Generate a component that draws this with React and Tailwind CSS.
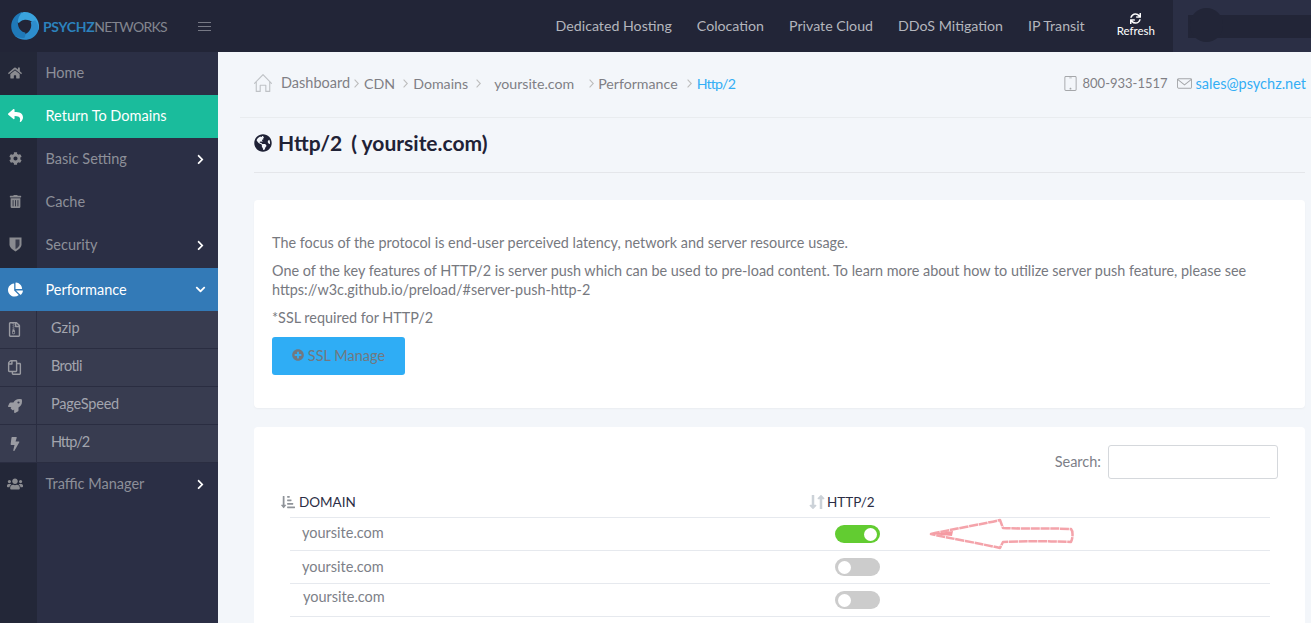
import React from "react";
import { FaHome, FaReply, FaCog, FaTrashAlt, FaChartPie, FaRegFileArchive, FaRegCopy, FaRocket, FaBolt, FaUsers, FaGlobeAmericas, FaPlusCircle, FaSync, FaChevronRight, FaChevronDown, FaSortAmountDownAlt, FaLongArrowAltDown, FaLongArrowAltUp } from "react-icons/fa";
import { SlHome, SlScreenTablet, SlEnvolope } from "react-icons/sl";

const font = "font-['Lato','Open_Sans',sans-serif]";

function Logo() {
  const blade = "M13 1.200 C22 0 30 8 29 17 C28.900 18 28.700 18.800 28.400 19.600 C26.500 12.500 20 8 14 9 C12 9.300 10.200 10.400 8.800 12 C7.200 11 5.800 10 5 8.500 C7 4.500 9.800 1.800 13 1.200 Z";
  return (
    <svg width="30" height="30" viewBox="0 0 30 30" className="shrink-0">
      <path d={blade} fill="#3aa3dd" />
      <path d={blade} fill="#2d8dcc" transform="rotate(120 15 15)" />
      <path d={blade} fill="#1f79b8" transform="rotate(240 15 15)" />
    </svg>
  );
}

function Shield() {
  return (
    <svg width="13" height="15" viewBox="0 0 13 15">
      <path d="M0.500 0.500h12v7c0 3-3 5.200-6 7-3-1.800-6-4-6-7z" fill="#8a8b90" />
      <path d="M6.500 2.500h4v5c0 1.900-2 3.400-4 4.600z" fill="#3a3d4c" />
    </svg>
  );
}

function Sep({ cls }) {
  return (
    <svg width="5" height="9" viewBox="0 0 5 9" className={cls}>
      <path d="M0.600 0.600 L4.300 4.500 L0.600 8.400" fill="none" stroke="#bdbdbd" strokeWidth="1.100" />
    </svg>
  );
}

function Row({ icon, label, h = "h-[43px]", bg = "bg-[#2b2f45]", iconBg = "bg-[#232738]", text = "text-[#8d8f99]", chev, iconCls = "text-[#8a8b90]", pb = "pb-[2px]", chevPb = "" }) {
  return (
    <div className={`flex items-center ${h} ${bg}`}>
      <div className={`w-[37px] h-full flex items-center justify-center pr-[7px] ${pb} ${iconBg} ${iconCls} text-[13px]`}>{icon}</div>
      <span className={`flex-1 pl-[8.5px] ${pb} text-[14.5px] ${text}`}>{label}</span>
      {chev && <span className={`pr-[12px] ${chevPb} text-white text-[11px]`}>{chev}</span>}
    </div>
  );
}

function Sub({ icon, label, cls = "" }) {
  return (
    <div className="flex h-[38px] bg-[#383c50] items-stretch border-b border-[#2a2d41]">
      <div className="w-[37px] flex items-center justify-center pr-[7px] text-[#9a9ba2] text-[15px] border-r border-[#2a2d41]">{icon}</div>
      <span className={`flex items-center pl-[14px] pb-[3px] text-[14.5px] text-[#a3a5ae] ${cls}`}>{label}</span>
    </div>
  );
}

function Sidebar() {
  return (
    <aside className="w-[218px] shrink-0 flex flex-col bg-[#2b2f45] relative">
      <Row icon={<FaHome className="text-[14px]" />} label="Home" />
      <Row icon={<FaReply className="text-[15px]" />} label="Return To Domains" bg="bg-[#1abc9c]" iconBg="bg-[#1abc9c]" text="text-white" iconCls="text-white" />
      <Row icon={<FaCog className="text-[13px]" />} label="Basic Setting" chev={<FaChevronRight />} />
      <Row icon={<FaTrashAlt className="text-[13px]" />} label="Cache" />
      <Row icon={<Shield />} label="Security" chev={<FaChevronRight />} h="h-[44px]" pb="pb-[3px]" chevPb="pb-[1px]" />
      <Row icon={<FaChartPie className="text-[15px]" />} label="Performance" pb="pb-0" bg="bg-[#337ab7]" iconBg="bg-[#337ab7]" text="text-white" iconCls="text-white" chev={<FaChevronDown />} />
      <Sub icon={<FaRegFileArchive />} label="Gzip" />
      <Sub icon={<FaRegCopy className="scale-x-[-1]" />} label="Brotli" cls="tracking-[-0.6px]" />
      <Sub icon={<FaRocket className="text-[14px]" />} label="PageSpeed" cls="tracking-[-0.2px]" />
      <Sub icon={<FaBolt className="text-[14px]" />} label="Http/2" cls="tracking-[-1px]" />
      <Row icon={<FaUsers className="text-[16px]" />} label="Traffic Manager" chev={<FaChevronRight />} />
      <div className="flex-1 w-[37px] bg-[#232738]" />
    </aside>
  );
}

function Header() {
  const nav = ["Dedicated Hosting", "Colocation", "Private Cloud", "DDoS Mitigation", "IP Transit"];
  return (
    <header className="h-[52px] flex bg-[#222537] shrink-0">
      <div className="w-[218px] flex items-center pl-[10px]">
        <Logo />
        <span className="ml-[3px] text-[14px] font-bold tracking-[-0.3px] text-[#2c82bd]">PSYCHZ</span>
        <span className="text-[14px] tracking-[-0.7px] text-[#83858f]">NETWORKS</span>
        <span className="ml-[31px] flex flex-col gap-[3px]">
          <i className="block w-[13px] h-px bg-[#777985]" />
          <i className="block w-[13px] h-px bg-[#777985]" />
          <i className="block w-[13px] h-px bg-[#777985]" />
        </span>
      </div>
      <nav className="flex-1 flex items-center justify-end gap-[25px] pr-[18px]">
        {nav.map((n) => (
          <span key={n} className="text-[14.2px] text-[#b4b6bd]">{n}</span>
        ))}
        <div className="flex flex-col items-center ml-[7px] -mt-[2px]">
          <FaSync className="text-white text-[11px]" />
          <span className="text-[11.500px] leading-[14px] text-white">Refresh</span>
        </div>
      </nav>
      <div className="w-[138px] bg-[#2b2f45] flex items-center relative overflow-hidden">
        <div className="absolute left-[15px] top-[15px] right-0 h-[23px] bg-[#222537]" />
        <div className="absolute left-[17px] top-[8px] w-[33px] h-[34px] rounded-full bg-[#222537]" />
      </div>
    </header>
  );
}

function Crumb() {
  return (
    <div className="h-[66px] ml-[22px] border-b border-[#e9ecef] flex items-center justify-between pl-[14px] pr-[5px] pb-[2px] text-[14.2px] text-[#7f7f85]">
      <div className="flex items-center">
        <SlHome className="text-[#bfc2c6] text-[18px] mr-[9px]" />
        <span className="-mt-[1px] text-[14.5px]">Dashboard</span>
        <Sep cls="ml-[4px] mr-[5px]" />
        <span>CDN</span>
        <Sep cls="ml-[8px] mr-[5px]" />
        <span>Domains</span>
        <Sep cls="ml-[8px] mr-[13px]" />
        <span>yoursite.com</span>
        <Sep cls="ml-[15px] mr-[4px]" />
        <span>Performance</span>
        <Sep cls="ml-[9px] mr-[5px]" />
        <span className="text-[#33aef5] tracking-[-0.8px]">Http/2</span>
      </div>
      <div className="flex items-center">
        <SlScreenTablet className="text-[#a5a7aa] text-[15px] mr-[5px]" />
        <span className="text-[13px]">800-933-1517</span>
        <SlEnvolope className="text-[#a5a7aa] text-[15px] ml-[9px] mr-[4px]" />
        <span className="text-[14.5px] text-[#33aef5]">sales@psychz.net</span>
      </div>
    </div>
  );
}

function Toggle({ on }) {
  return (
    <div className={`w-[45px] h-[18px] rounded-full flex items-center px-[3px] ${on ? "bg-[#62cc31] justify-end" : "bg-[#cccccc] justify-start"}`}>
      <div className="w-[13px] h-[13px] rounded-full bg-white" />
    </div>
  );
}

function TableRow({ name, on, pl = "pl-[12px]", pb = "pb-[2px]" }) {
  return (
    <div className="flex items-center border-b border-[#e6e9ee] h-[33px]">
      <span className={`w-[545px] ${pl} ${pb} text-[14.5px] text-[#7d7f88]`}>{name}</span>
      <Toggle on={on} />
    </div>
  );
}

export default function App() {
  return (
    <div className={`w-[1311px] h-[623px] overflow-hidden flex flex-col bg-[#f3f6fa] ${font}`}>
      <Header />
      <div className="flex flex-1 min-h-0">
        <Sidebar />
        <main className="flex-1 min-w-0 relative">
          <Crumb />
          <div className="pl-[36px] pr-[6px]">
            <div className="h-[55px] pb-[5px] border-b border-[#e4e6ea] flex items-center text-[#1f2236] text-[21px] font-bold">
              <FaGlobeAmericas className="text-[18px] mr-[6px]" />
              <span>Http/2</span>
              <span className="ml-[9px]">( yoursite.com)</span>
            </div>
            <section className="mt-[27px] h-[208px] bg-white rounded-[4px] shadow-[0_1px_2px_rgba(0,0,0,0.04)] px-[18px] pt-[33px] text-[14.4px] leading-[19px] text-[#77797f]">
              <p>The focus of the protocol is end-user perceived latency, network and server resource usage.</p>
              <p className="mt-[9px]">One of the key features of HTTP/2 is server push which can be used to pre-load content. To learn more about how to utilize server push feature, please see https://w3c.github.io/preload/#server-push-http-2</p>
              <p className="mt-[9px]">*SSL required for HTTP/2</p>
              <button className="mt-[10px] w-[133px] h-[38px] pb-[2px] rounded-[3px] bg-[#2fadf5] flex items-center justify-center text-[14.5px] text-[#72787f]">
                <FaPlusCircle className="text-[12px] mr-[4px]" />
                SSL Manage
              </button>
            </section>
            <section className="mt-[19px] bg-white rounded-[4px] h-[300px] pt-[18px] pl-[27px] pr-[27px] relative">
              <div className="flex items-center justify-end text-[14.5px] text-[#7d7f88]">
                <span className="mr-[7px]">Search:</span>
                <div className="w-[170px] h-[34px] border border-[#d5d8dc] rounded-[3px]" />
              </div>
              <div className="flex items-center h-[39px] pt-[7px] text-[13.500px] text-[#2b2e45] -mb-px">
                <span className="w-[526px] flex items-center">
                  <FaSortAmountDownAlt className="text-[#8f9399] text-[14px] mr-[4px]" />
                  DOMAIN
                </span>
                <span className="flex items-center">
                  <FaLongArrowAltDown className="text-[#ccd2d8] text-[16px] -mx-[2px]" />
                  <FaLongArrowAltUp className="text-[#ccd2d8] text-[16px] -ml-[6px] -mr-[2px]" />
                  HTTP/2
                </span>
              </div>
              <div className="ml-[9px] mr-[8px] border-t border-[#e6e9ee]">
                <TableRow name="yoursite.com" on pb="pb-[2px]" />
                <TableRow name="yoursite.com" pb="pb-[1px]" />
                <TableRow name="yoursite.com" pl="pl-[13px]" pb="pb-[6px]" />
              </div>
              <svg className="absolute left-[674px] top-[89px]" width="150" height="36" viewBox="0 0 150 36">
                <path d="M3 18 C20 14 55 8 72 4 L75 12 C95 13 125 12 143 13 C145 15 145 22 143 26 C120 25 95 25 75 26 L72 32 C55 28 20 22 3 18 Z" fill="none" stroke="#f4a3aa" strokeWidth="2.500" strokeLinejoin="round" strokeDasharray="9 0.7" />
                <path d="M3 18 L25 15 L24 20 Z" fill="#f59aa2" />
              </svg>
            </section>
          </div>
        </main>
      </div>
    </div>
  );
}
